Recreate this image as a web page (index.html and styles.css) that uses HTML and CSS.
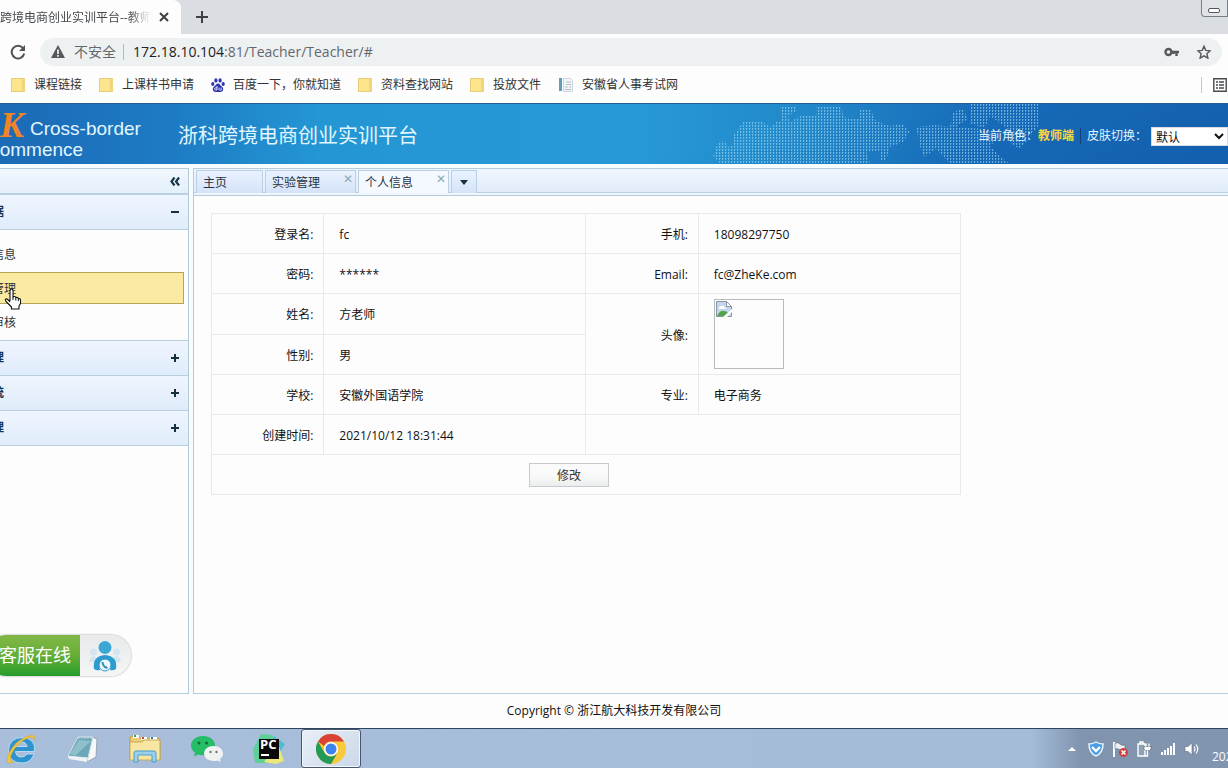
FILE: index.html
```
<!DOCTYPE html>
<html lang="zh-CN">
<head>
  <meta charset="UTF-8">
  <title>浙科跨境电商创业实训平台--教师端</title>
  <link rel="stylesheet" href="styles.css">
</head>
<body>

<!-- Browser tabs -->
<div class="tabstrip">
  <div class="browser-tab">
    <span class="browser-tab-title">跨境电商创业实训平台--教师端</span>
    <button class="icon-btn" aria-label="关闭标签页">
      <svg width="10" height="10" viewBox="0 0 10 10"><path d="M1 1l8 8M9 1l-8 8" stroke="#3c4043" stroke-width="2"/></svg>
    </button>
  </div>
  <button class="icon-btn new-tab" aria-label="新标签页">
    <svg width="12" height="12" viewBox="0 0 12 12"><path d="M6 0v12M0 6h12" stroke="#3c4043" stroke-width="2"/></svg>
  </button>
  <button class="window-min" aria-label="最小化">
    <svg width="12" height="5" viewBox="0 0 12 5"><rect x=".5" y=".5" width="11" height="4" rx="1.5" fill="#fff" stroke="#50565e"/></svg>
  </button>
</div>

<!-- Address bar -->
<div class="toolbar">
  <button class="icon-btn" aria-label="重新加载">
    <svg width="16" height="16" viewBox="0 0 16 16"><path d="M13 4.2A6.3 6.3 0 1 0 14.2 9.500" fill="none" stroke="#50545a" stroke-width="2"/><path d="M15 1v6H9z" fill="#50545a"/></svg>
  </button>
  <div class="address">
    <svg width="14" height="13" viewBox="0 0 14 13"><path d="M7 0l7 13H0z" fill="#55585c"/><path d="M7 4.500v4.500M7 10v1.700" stroke="#fff" stroke-width="1.600"/></svg>
    <span class="insecure">不安全</span>
    <span class="url"><b>172.18.10.104</b>:81/Teacher/Teacher/#</span>
    <svg width="15" height="10" viewBox="0 0 15 10"><circle cx="4.500" cy="5" r="3" fill="none" stroke="#55585c" stroke-width="2.400"/><path d="M7 5h8M12.500 5v4M9.500 5v2" stroke="#55585c" stroke-width="2.400"/></svg>
    <svg width="14" height="14" viewBox="0 0 24 24"><path d="M12 2l3 7.200 7.800.7-5.900 5.100 1.800 7.600L12 18.500l-6.700 4.100 1.800-7.600L1.200 9.900 9 9.200z" fill="none" stroke="#55585c" stroke-width="2.400"/></svg>
  </div>
</div>

<!-- Bookmarks -->
<div class="bookmarks">
  <a href="#"><span class="note"></span>课程链接</a>
  <a href="#"><span class="note"></span>上课样书申请</a>
  <a href="#">
    <svg width="14" height="14" viewBox="0 0 14 14"><g fill="#2d36b0"><ellipse cx="1.800" cy="6" rx="1.600" ry="2.100"/><ellipse cx="4.900" cy="2.400" rx="1.600" ry="2.200"/><ellipse cx="9.100" cy="2.400" rx="1.600" ry="2.200"/><ellipse cx="12.200" cy="6" rx="1.600" ry="2.100"/><path d="M7 5.500c1.600 0 2.300 1.700 3.500 2.800 1.300 1.100 2 2 1.600 3.600-.4 1.700-2 2.100-5.100 2.100s-4.700-.4-5.100-2.100C1.500 10.300 2.200 9.400 3.500 8.300 4.700 7.200 5.400 5.500 7 5.500z"/></g><path d="M6 8v4H4.700a1 1 0 0 1 0-2.200H6M8 9.600V11.500q0 .6.8.6h1.400V9.600" fill="none" stroke="#fff" stroke-width=".8"/></svg>
    百度一下，你就知道</a>
  <a href="#"><span class="note"></span>资料查找网站</a>
  <a href="#"><span class="note"></span>投放文件</a>
  <a href="#">
    <svg width="16" height="16" viewBox="0 0 16 16"><path d="M1 1h3v13H1z" fill="#5f9dbd"/><path d="M5.500 1.500h7l2 2v11h-9z" fill="#f3f6f9" stroke="#ccd6e0"/><path d="M8 5h5M8 7.500h5M7 10h3M11 10h2M7 12.500h6" stroke="#b4bfca"/></svg>
    安徽省人事考试网</a>
  <button class="icon-btn reading-list" aria-label="阅读清单">
    <svg width="14" height="14" viewBox="0 0 14 14"><path d="M.8.8h12.400v12.400H.8z" fill="none" stroke="#484c50" stroke-width="1.400"/><path d="M3 4h2M6 4h5M3 7h2M6 7h5M3 10h2M6 10h5" stroke="#484c50" stroke-width="1.500"/></svg>
  </button>
</div>

<!-- Platform header -->
<header class="header">
  <svg class="map" width="325" height="60" viewBox="0 0 325 60">
    <defs>
      <pattern id="dots" width="3" height="3" patternUnits="userSpaceOnUse"><rect width="1" height="2" fill="#a5dcf5"/><rect x="1" width="1" height="1" fill="#a5dcf5" opacity=".4"/></pattern>
    </defs>
    <g fill="url(#dots)">
      <path d="M0 52L5 38 12 37 15 43 20 42 20 32 30 18 50 18 57 23 63 18 68 17 67 2 83 2 83 7 75 12 77 18 87 12 103 12 103 3 129 3 130 13 147 15 147 5 157 5 163 17 177 22 190 20 197 28 190 38 177 43 173 57 167 57 167 47 153 47 157 60 8 60z"/>
      <path d="M203 23L222 21 237 23 240 8 250 5 255 15 243 23 272 25 285 35 277 42 287 52 297 60 237 60 223 45 211 53 207 42z"/>
      <path d="M257 0L325 0 325 22 307 45 298 40 295 25 277 12 272 24 257 20z"/>
    </g>
  </svg>
  <div class="logo">
    <div class="logo-first"><span class="logo-k">K</span>Cross-border</div>
    <div class="logo-second">Commence</div>
  </div>
  <h1>浙科跨境电商创业实训平台</h1>
  <div class="role">
    <span>当前角色：<strong>教师端</strong></span>
    <label for="skin">皮肤切换：</label>
    <select id="skin">
      <option>默认</option>
    </select>
  </div>
</header>

<main class="main">
  <!-- Left menu -->
  <nav class="sidebar">
    <div class="sidebar-top">
      <button class="icon-btn" aria-label="收起菜单">
        <svg width="10" height="9" viewBox="0 0 10 9"><path d="M4.500.5l-3 4 3 4M9 .5l-3 4 3 4" fill="none" stroke="#16364a" stroke-width="2.200"/></svg>
      </button>
    </div>
    <button class="group">据 <svg width="10" height="10" viewBox="0 0 10 10"><path d="M1 5h8" stroke="#16303e" stroke-width="2"/></svg></button>
    <ul class="menu">
      <li><a href="#">信息</a></li>
      <li><a href="#" class="active">管理</a></li>
      <li><a href="#">审核</a></li>
    </ul>
    <button class="group">理 <svg width="10" height="10" viewBox="0 0 10 10"><path d="M1 5h8M5 1v8" stroke="#16303e" stroke-width="2"/></svg></button>
    <button class="group">统 <svg width="10" height="10" viewBox="0 0 10 10"><path d="M1 5h8M5 1v8" stroke="#16303e" stroke-width="2"/></svg></button>
    <button class="group">理 <svg width="10" height="10" viewBox="0 0 10 10"><path d="M1 5h8M5 1v8" stroke="#16303e" stroke-width="2"/></svg></button>

    <svg class="cursor" width="18" height="22" viewBox="0 0 18 22"><path d="M6 13V2.500a1.500 1.500 0 0 1 3 0V9q2.200-1.200 2.800.6 2-.8 2.500.9 2.200-.4 2.200 1.500v3.500L15 18v3H7.500v-2L2 13.500q-1.500-2.300.4-2.600 1-.1 3.600 3" fill="#fff" stroke="#111" stroke-width="1.100" stroke-linejoin="round"/><path d="M9 9v3M11.800 10v2.500M14.300 11v2" stroke="#111"/></svg>

    <a href="#" class="service">
      <span class="service-text">客服在线</span>
      <span class="service-icon">
        <svg width="32" height="32" viewBox="0 0 32 32"><g fill="#d3e5ee"><circle cx="4.500" cy="12" r="3.500"/><circle cx="27.500" cy="12" r="3.500"/><path d="M0 22q1-7 6-6l3 6zM32 22q-1-7-6-6l-3 6z"/></g><circle cx="16" cy="7.500" r="6.500" fill="#3aa7d6"/><path d="M5 29q-2-13 11-14 13 1 11 14-3 2-6 1a5.500 5.500 0 1 0-10 0q-3 1-6-1z" fill="#2c9bcd"/><circle cx="16" cy="25" r="6" fill="#ecf6fb" stroke="#2c9bcd"/><path d="M13.500 22q0 4.500 5 6" fill="none" stroke="#2c8fc0" stroke-width="2"/></svg>
      </span>
    </a>
  </nav>

  <!-- Content -->
  <section class="content">
    <div class="tabs">
      <button class="tab">主页</button>
      <div class="tab"><a href="#">实验管理</a><button class="tab-close" aria-label="关闭">✕</button></div>
      <div class="tab selected"><a href="#">个人信息</a><button class="tab-close" aria-label="关闭">✕</button></div>
      <button class="tab more" aria-label="更多标签">
        <svg width="8" height="5" viewBox="0 0 8 5"><path d="M0 0h8L4 5z" fill="#16303e"/></svg>
      </button>
    </div>

    <table class="info">
      <colgroup><col class="col-label"><col class="col-value"><col class="col-label"><col class="col-value"></colgroup>
      <tr><th>登录名:</th><td>fc</td><th>手机:</th><td>18098297750</td></tr>
      <tr><th>密码:</th><td>******</td><th>Email:</th><td>fc@ZheKe.com</td></tr>
      <tr>
        <th>姓名:</th><td>方老师</td>
        <th rowspan="2">头像:</th>
        <td rowspan="2" class="avatar-cell">
          <div class="avatar">
            <svg width="16" height="16" viewBox="0 0 16 16"><path d="M.5.5h10l5 5v10H.5z" fill="#c4d5ee" stroke="#8b959f"/><path d="M10.500.5v5h5z" fill="#fff" stroke="#8b959f"/><path d="M3 7q0-2 2-2 2-1 3 1 2 0 2 2H3z" fill="#fff"/><path d="M1 15q3-6 7-5 3 0 4 2l-3 3z" fill="#51a44a"/><path d="M7 16l9-8v3l-5 5z" fill="#fff"/></svg>
          </div>
        </td>
      </tr>
      <tr><th>性别:</th><td>男</td></tr>
      <tr><th>学校:</th><td>安徽外国语学院</td><th>专业:</th><td>电子商务</td></tr>
      <tr><th>创建时间:</th><td>2021/10/12 18:31:44</td><td colspan="2"></td></tr>
      <tr><td colspan="4" class="actions"><button class="edit-btn">修改</button></td></tr>
    </table>
  </section>
</main>

<footer class="footer">Copyright © 浙江航大科技开发有限公司</footer>

<!-- Windows taskbar -->
<div class="taskbar">
  <button class="task" aria-label="Internet Explorer">
    <svg width="32" height="32" viewBox="0 0 32 32"><path d="M22 21q-2 3-5.500 3-5.500 0-6-5.500H29.500Q31 5 17 4.500 4 5 3.500 17.500 4 30 17 30q9 0 12-9zM10.700 13.500q1-4.500 5.800-4.500t5.700 4.500z" fill="#2f93d0" stroke="#c7e9f8" stroke-width=".8" fill-rule="evenodd"/><path d="M30 7q1-7-8-3.500Q10 8 4 20q-4 9 0 10 2 .4 5-1.500-5 .5-3-6.500Q12 9 23 5q6-2 7 2z" fill="#f0c540" stroke="#d8a31f" stroke-width=".5"/></svg>
  </button>
  <button class="task" aria-label="记事本">
    <svg width="32" height="30" viewBox="0 0 32 30"><path d="M25 3l5 2-1 18-9 5z" fill="#f5f7f8" stroke="#7f8e99" stroke-width=".7"/><path d="M11 3h15l-5 21L1 22z" fill="#6da8b8" stroke="#d6e6ec"/><path d="M12 6l12 1L8 22l-5-2z" fill="#a7ced6" opacity=".6"/><path d="M1 22l20 2-1 4L2 25z" fill="#eef3f5"/><path d="M12 2v3M15 2v3M18 2v3M21 2v3M24 2v3" stroke="#c9d5da"/></svg>
  </button>
  <button class="task" aria-label="文件资源管理器">
    <svg width="32" height="30" viewBox="0 0 32 30"><path d="M1 4q0-2 2-2h6l2 2h18q2 0 2 2v19H1z" fill="#e8cf76" stroke="#b99a42"/><path d="M4 1h6v3H4zM12 3h6v3h-6zM21 3h7v3h-7z" fill="#fff"/><path d="M5 1h2v2H5z" fill="#32a046"/><path d="M13 3h2v2h-2z" fill="#d8432d"/><path d="M22 3h2v2h-2z" fill="#3378b5"/><path d="M1 8h12l2-2h16v20H1z" fill="#f8e6a2" stroke="#caaa55"/><path d="M5 28V19q0-2 2-2h18q2 0 2 2v9h-4v-7H9v7z" fill="#98d0ed" stroke="#4f9fcb"/></svg>
  </button>
  <button class="task" aria-label="微信">
    <svg width="34" height="28" viewBox="0 0 34 28"><path d="M13 1C5.500 1 1 5.500 1 10.500c0 3 1.500 5.500 4 7l-1 4 4-2q2 .7 5 .7 12-1 12-9.700C25 5 20 1 13 1z" fill="#25bd65"/><circle cx="9" cy="8" r="1.500" fill="#14683a"/><circle cx="16.500" cy="8" r="1.500" fill="#14683a"/><path d="M23.500 11c6 0 9.500 3.500 9.500 7.500 0 2.500-1 4-3 5.500l1 3-3.500-1.500q-1.500.5-4 .5-9-.5-9.500-7.500c0-4 4-7.500 9.500-7.500z" fill="#f1f3f3"/><circle cx="20.500" cy="17" r="1.200" fill="#777"/><circle cx="26.500" cy="17" r="1.200" fill="#777"/></svg>
  </button>
  <button class="task" aria-label="PyCharm">
    <svg width="32" height="30" viewBox="0 0 32 30"><path d="M8 0l11 1 4 6-8 22H2L0 15z" fill="#5fcf9a"/><path d="M21 2l8 6 3 2-5 8-8-8z" fill="#4fb9d6"/><path d="M25 10l6 17-8 3-12-2z" fill="#ebe878"/><path d="M6 5h20v20H6z" fill="#080808"/><text x="7" y="15" class="pc">PC</text><path d="M8 21h8" stroke="#fff" stroke-width="2"/></svg>
  </button>
  <button class="task running" aria-label="Google Chrome">
    <svg width="30" height="30" viewBox="0 0 30 30"><circle cx="15" cy="15" r="15" fill="#f8c93b"/><path d="M2 7.500A15 15 0 0 1 28 7.500H15A7.500 7.500 0 0 0 8 12z" fill="#da4437"/><path d="M2 7.500A15 15 0 0 0 15 30l6.500-11.200A7.500 7.500 0 0 1 8.500 18.800z" fill="#239a57"/><circle cx="15" cy="15" r="7" fill="#fff"/><circle cx="15" cy="15" r="5.500" fill="#4083ee"/></svg>
  </button>
  <div class="tray">
    <svg width="8" height="4" viewBox="0 0 8 4"><path d="M0 4l4-4 4 4z" fill="#fff"/></svg>
    <svg width="16" height="16" viewBox="0 0 16 16"><path d="M1 3q4 0 7-2 3 2 7 2 0 9-7 12Q1 12 1 3z" fill="#4b9de2" stroke="#e8f5fe" stroke-width="1.500"/><path d="M4 6l4 4 4-4" fill="none" stroke="#fff" stroke-width="2.400"/></svg>
    <svg width="16" height="16" viewBox="0 0 16 16"><path d="M2 1v15" stroke="#fff" stroke-width="2"/><path d="M3 2q3-1 5 1t5 1v6q-3 1-5-1t-5-1z" fill="#edf1f5" stroke="#5c6878" stroke-width=".6"/><circle cx="11.500" cy="11.500" r="4.500" fill="#ce423d"/><path d="M9.500 9.500l4 4M13.500 9.500l-4 4" stroke="#fff" stroke-width="1.500"/></svg>
    <svg width="16" height="16" viewBox="0 0 16 16"><path d="M2 3h7v12H2zM4 1h3v2H4z" fill="#8fa0b7" stroke="#fff" stroke-width="1.400"/><path d="M8 5.500h7v2.500q-1 2-3.500 2T8 8z" fill="#fff" stroke="#4c5b70" stroke-width=".6"/><path d="M10 2.500v3M13 2.500v3M11.500 10v5H9" fill="none" stroke="#fff" stroke-width="1.400"/></svg>
    <svg width="16" height="12" viewBox="0 0 16 12"><path d="M1 9h2v3H1zM4 7h2v5H4zM7 5h2v7H7zM10 3h2v9h-2zM13 0h2v12h-2z" fill="#fff"/></svg>
    <svg width="15" height="14" viewBox="0 0 15 14"><path d="M1 4.500h3L8 1v12L4 9.500H1z" fill="#fff" stroke="#5d6c80" stroke-width=".6"/><path d="M10 4.500q2 2.500 0 5M12 2.500q3.500 4.500 0 9" fill="none" stroke="#fff" stroke-width="1.200"/></svg>
    <span class="clock">202</span>
  </div>
</div>

</body>
</html>
```
FILE: styles.css
```
* {
  box-sizing: border-box;
}
body {
  display: flex;
  flex-direction: column;
  min-height: 100vh;
  margin: 0;
  overflow: hidden;
  background: #fdfdfd;
  color: #111;
  font-family: "Open Sans", "Noto Sans CJK SC", sans-serif;
  font-size: 12px;
  line-height: 16px;
}
button, select {
  font: inherit;
  color: inherit;
}
a {
  color: inherit;
  text-decoration: none;
}
svg {
  display: block;
  flex: none;
}
.icon-btn {
  display: flex;
  padding: 0;
  border: 0;
  background: none;
}

/* Browser */
.tabstrip {
  display: flex;
  align-items: center;
  height: 34px;
  background: #dadee2;
}
.browser-tab {
  display: flex;
  align-items: center;
  gap: 8px;
  width: 181px;
  height: 34px;
  padding-right: 12px;
  border-radius: 0 8px 0 0;
  background: #fdfdfd;
}
.browser-tab-title {
  flex: 1;
  overflow: hidden;
  padding-top: 1px;
  white-space: nowrap;
  color: #45494d;
  -webkit-mask-image: linear-gradient(to right, #000 85%, transparent);
  mask-image: linear-gradient(to right, #000 85%, transparent);
}
.new-tab {
  margin-left: 15px;
}
.window-min {
  display: flex;
  align-self: flex-start;
  align-items: flex-end;
  width: 27px;
  height: 17px;
  margin-left: auto;
  padding: 0 0 3px 6px;
  border: 1px solid #777e86;
  border-width: 0 1px 1px;
  border-radius: 0 0 0 4px;
  background: #e1e4e7;
}
.toolbar {
  display: flex;
  align-items: center;
  gap: 14px;
  height: 35px;
  padding: 0 6px 0 10px;
}
.address {
  display: flex;
  flex: 1;
  align-items: center;
  gap: 9px;
  height: 28px;
  padding: 0 11px;
  border-radius: 14px;
  background: #eef1f2;
  font-size: 14px;
}
.insecure {
  padding-right: 7px;
  border-right: 1px solid #b5b9bd;
  color: #64686c;
}
.url {
  flex: 1;
  color: #64686c;
}
.url b {
  color: #202124;
  font-weight: normal;
}
.address svg + svg {
  margin-left: 9px;
}
.bookmarks {
  display: flex;
  align-items: center;
  gap: 17px;
  height: 34px;
  padding: 0 0 3px 11px;
  color: #333;
}
.bookmarks a {
  display: flex;
  align-items: center;
  gap: 8px;
}
.note {
  width: 14px;
  height: 14px;
  margin-right: 1px;
  border: 1px solid #e6cd7c;
  border-right: 3px solid #efd57b;
  border-radius: 1px;
  background: #fce58d;
}
.reading-list {
  margin-left: auto;
  padding: 1px 1px 1px 11px;
  border-left: 1px solid #c3c7ca;
}

/* Platform header */
.header {
  position: relative;
  display: flex;
  flex: none;
  align-items: center;
  height: 61px;
  border-top: 1px solid #245b92;
  background: linear-gradient(170deg, rgba(0, 60, 140, 0) 60%, rgba(0, 60, 140, .15)), linear-gradient(to right, #1c6ab6 0, #1d7bc4 14%, #2496d4 26%, #2799d6 52%, #2187c9 66%, #176cb9 80%, #1565b3 100%);
  color: #e2f6ff;
}
.map {
  position: absolute;
  right: 190px;
  bottom: 0;
  opacity: .6;
}
.logo {
  width: 178px;
  padding-top: 9px;
  font-family: "Liberation Sans", Arial, sans-serif;
  font-size: 19px;
  line-height: 21px;
}
.logo-first {
  display: flex;
}
.logo-k {
  width: 30px;
  color: #f18427;
  font: italic bold 36px/15px "Liberation Serif", serif;
}
.logo-second {
  margin-left: -14px;
}
h1 {
  margin: 0;
  padding-top: 4px;
  font-size: 20px;
  font-weight: normal;
  line-height: 28px;
}
.role {
  position: relative;
  display: flex;
  align-items: center;
  margin-left: auto;
  padding-top: 4px;
}
.role strong {
  margin-right: 6px;
  color: #f8d83c;
}
.role label {
  padding-left: 6px;
  border-left: 1px solid #173f75;
}
.role select {
  width: 77px;
  height: 19px;
  margin-left: 4px;
  padding: 0;
  border: 1px solid #d8dce0;
  border-radius: 0;
  background: #fff;
  color: #111;
}

/* Page body */
.main {
  display: flex;
  flex: 1;
  gap: 4px;
  padding-top: 4px;
  background: #f7fcff;
}
.sidebar {
  position: relative;
  flex: none;
  width: 198px;
  margin-left: -9px;
  border: 1px solid #b4cbdc;
  background: #fdfdfd;
}
.sidebar-top {
  display: flex;
  align-items: center;
  justify-content: flex-end;
  height: 26px;
  padding-right: 8px;
  border-bottom: 2px solid #b9d0e0;
  background: linear-gradient(#f1f7fe, #e4effb);
}
.group {
  display: flex;
  align-items: center;
  justify-content: space-between;
  width: 100%;
  height: 35px;
  padding: 0 8px 0 0;
  border: 0;
  border-bottom: 1px solid #b9cfe0;
  background: linear-gradient(#eff5fe, #e0ecfb);
  color: #173556;
  font-weight: bold;
}
.menu {
  display: flex;
  flex-direction: column;
  gap: 2px;
  margin: 0;
  padding: 8px 4px 2px 0;
  border-bottom: 1px solid #b9cfe0;
  list-style: none;
}
.menu a {
  display: block;
  height: 32px;
  border: 1px solid transparent;
  border-left: 0;
  color: #333;
  line-height: 31px;
}
.menu .active {
  border-color: #b8a253;
  background: #fbeaa2;
}
.cursor {
  position: absolute;
  top: 119px;
  left: 12px;
}
.service {
  position: absolute;
  bottom: 17px;
  left: -6px;
  display: flex;
  height: 41px;
  border-radius: 21px;
  box-shadow: 0 0 2px #888;
  overflow: hidden;
}
.service-text {
  width: 94px;
  padding-left: 13px;
  background: linear-gradient(#81b747, #67ae37 50%, #259c2b);
  color: #fff;
  font-size: 18px;
  line-height: 40px;
  white-space: nowrap;
}
.service-icon {
  display: flex;
  align-items: center;
  width: 51px;
  padding-left: 9px;
  background: linear-gradient(#e8eaeb, #f4f5f5);
}
.content {
  flex: 1;
  border: 1px solid #b4cbdc;
  border-right: 0;
  background: #fdfdfd;
}
.tabs {
  display: flex;
  gap: 2px;
  height: 27px;
  padding: 1px 2px 2px;
  border-bottom: 1px solid #b4cbdc;
  background: linear-gradient(#eff6fe, #e1ecfa 23px, #b9cfe4 23px, #b9cfe4 24px, #eff6fe 24px);
}
.tab {
  display: flex;
  justify-content: space-between;
  min-width: 67px;
  height: 23px;
  padding: 0 0 0 6px;
  border: 1px solid #b9cfe4;
  border-bottom: 0;
  background: linear-gradient(#eaf2fe, #d4e3f9);
  color: #27333f;
  line-height: 24px;
}
.tab.selected {
  background: #f4f9ff;
}
.tab-close {
  align-self: flex-start;
  margin: 0;
  padding: 0 2px;
  border: 0;
  background: none;
  color: #8caab4;
  font: 12px/16px "DejaVu Sans", sans-serif;
}
div.tab {
  width: 91px;
}
.more {
  justify-content: center;
  align-items: center;
  min-width: 26px;
  padding: 0;
}
.info {
  width: 750px;
  max-width: calc(100% - 34px);
  margin: 17px;
  border-collapse: collapse;
  table-layout: fixed;
}
.col-label {
  width: 15%;
}
.col-value {
  width: 35%;
}
.info th, .info td {
  height: 40px;
  padding: 3px 15px 0;
  border: 1px solid #e8eaec;
  text-align: left;
}
.info th {
  padding: 3px 10px 0 0;
  font-weight: normal;
  text-align: right;
}
.info .avatar-cell {
  padding: 5px 15px;
}
.avatar {
  width: 70px;
  height: 70px;
  padding: 1px;
  border: 1px solid #b7babd;
}
.info .actions {
  padding: 0 49px 0 15px;
  text-align: center;
}
.edit-btn {
  width: 80px;
  height: 24px;
  padding: 2px 0 0;
  border: 1px solid #c6cacc;
  background: linear-gradient(#fafafa 50%, #ebeeee);
  color: #333;
}
.footer {
  flex: none;
  height: 34px;
  line-height: 34px;
  text-align: center;
}

/* Taskbar */
.taskbar {
  display: flex;
  flex: none;
  gap: 2px;
  height: 40px;
  border-top: 1px solid #2f455e;
  background: linear-gradient(to right, #a8bedb, #a5bcd9 84%, #8094ad 88%, #8195b0);
}
.task {
  display: flex;
  flex: none;
  align-items: center;
  justify-content: center;
  width: 60px;
  padding: 0;
  border: 1px solid transparent;
  background: none;
}
.task:first-child {
  margin-left: -9px;
}
.running {
  border-color: #46586d;
  border-radius: 3px;
  background: linear-gradient(135deg, #e9eff7, #cad8e8);
  box-shadow: inset 0 0 0 1px #f3f7fb;
}
.pc {
  fill: #fff;
  font: bold 13px "Open Sans", sans-serif;
}
.tray {
  display: flex;
  align-items: center;
  gap: 8px;
  margin-left: auto;
}
.tray svg:first-child {
  margin-right: 4px;
}
.clock {
  align-self: flex-end;
  width: 16px;
  margin-left: 5px;
  padding-bottom: 3px;
  overflow: hidden;
  color: #fff;
}
```
